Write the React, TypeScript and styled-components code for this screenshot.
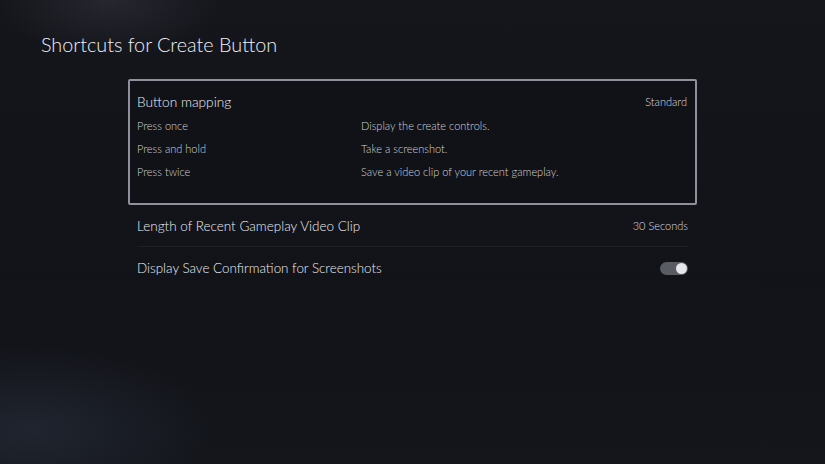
import React from "react";
import styled, { createGlobalStyle } from "styled-components";

const GlobalStyle = createGlobalStyle`
  html, body {
    margin: 0;
    padding: 0;
    background: #121319;
  }
  * {
    box-sizing: border-box;
  }
`;

const Page = styled.div`
  width: 825px;
  height: 464px;
  overflow: hidden;
  font-family: Lato, "Open Sans", sans-serif;
  font-weight: 300;
  color: #e4e5ea;
  background:
    radial-gradient(ellipse 260px 120px at 30px 430px, rgba(60, 72, 92, 0.3), transparent 70%),
    radial-gradient(ellipse 160px 80px at 110px 0px, rgba(70, 72, 82, 0.35), transparent 70%),
    linear-gradient(180deg, #15161c 0%, #121319 60%, #14161c 100%);
`;

const Title = styled.h1`
  margin: 0;
  padding: 32px 0 0 41px;
  height: 79px;
  font-size: 19.8px;
  font-weight: 300;
  color: #eef0f4;
`;

const Content = styled.div`
  margin-left: 128px;
  width: 569px;
  display: flex;
  flex-direction: column;
`;

const Card = styled.div`
  height: 126px;
  border: 2px solid #8f909b;
  border-radius: 2px;
  background: #111218;
  padding: 10px 8px 0 7px;
  display: flex;
  flex-direction: column;
`;

const CardHeader = styled.div`
  display: flex;
  justify-content: space-between;
  align-items: center;
  height: 20px;
  margin-bottom: 3px;
`;

const Label = styled.span<{ $size?: number }>`
  font-size: ${(p) => p.$size ?? 13.7}px;
  color: #eceef2;
`;

const Value = styled.span`
  font-size: 11px;
  color: #dadce2;
`;

const MapRow = styled.div`
  display: grid;
  grid-template-columns: 224px 1fr;
  height: 23px;
  align-items: center;
  font-size: 11px;
  color: #d0d2d8;
`;

const SettingRow = styled.div<{ $divider?: boolean }>`
  height: 42px;
  margin: 0 9px;
  display: flex;
  justify-content: space-between;
  align-items: center;
  border-bottom: ${(p) => (p.$divider ? "1px solid #1f2027" : "none")};
`;

const Toggle = styled.div`
  width: 28px;
  height: 13px;
  border-radius: 7px;
  background: #5a5c63;
  display: flex;
  justify-content: flex-end;
  align-items: center;
  padding: 1px;
`;

const Knob = styled.div`
  width: 11px;
  height: 11px;
  border-radius: 50%;
  background: #e6e7ea;
`;

const mappings = [
  ["Press once", "Display the create controls."],
  ["Press and hold", "Take a screenshot."],
  ["Press twice", "Save a video clip of your recent gameplay."],
];

export default function App() {
  return (
    <>
      <GlobalStyle />
      <Page>
        <Title>Shortcuts for Create Button</Title>
        <Content>
          <Card>
            <CardHeader>
              <Label>Button mapping</Label>
              <Value>Standard</Value>
            </CardHeader>
            {mappings.map(([action, result]) => (
              <MapRow key={action}>
                <span>{action}</span>
                <span>{result}</span>
              </MapRow>
            ))}
          </Card>
          <SettingRow $divider>
            <Label $size={13.5}>Length of Recent Gameplay Video Clip</Label>
            <Value>30 Seconds</Value>
          </SettingRow>
          <SettingRow>
            <Label $size={13.4}>Display Save Confirmation for Screenshots</Label>
            <Toggle>
              <Knob />
            </Toggle>
          </SettingRow>
        </Content>
      </Page>
    </>
  );
}
